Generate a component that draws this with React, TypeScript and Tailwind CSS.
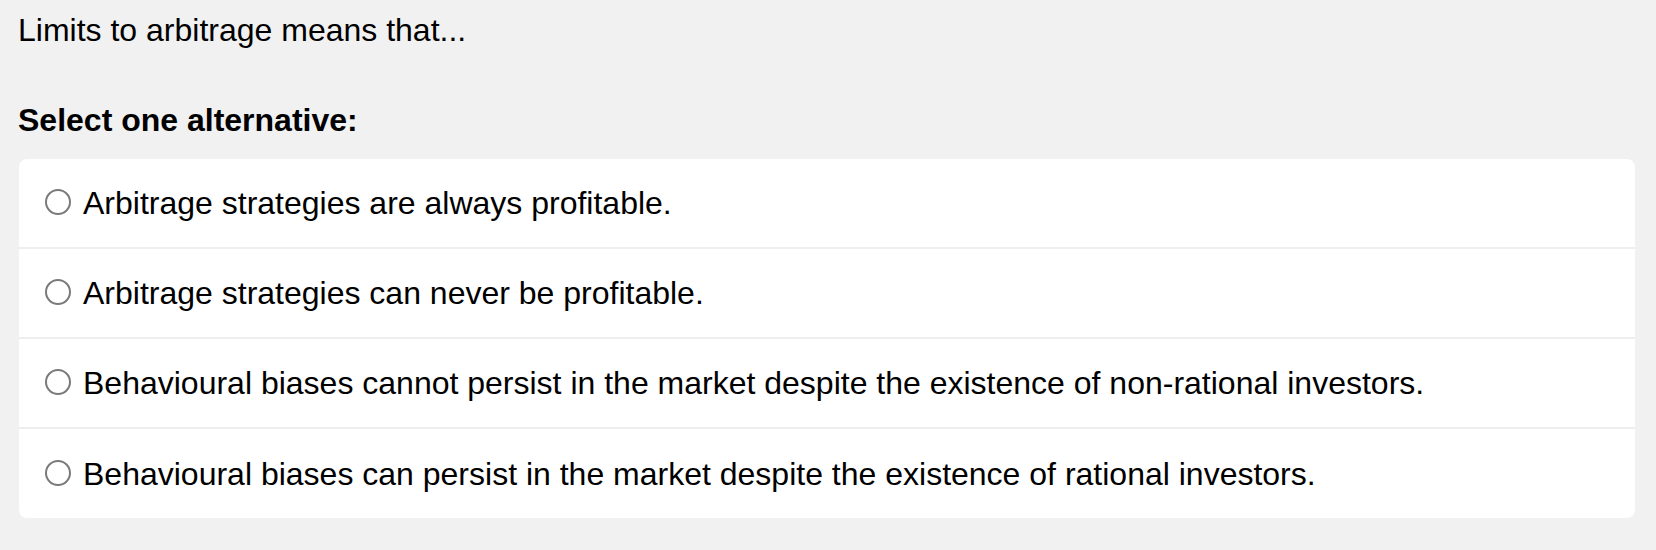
import React from 'react'

const options = [
	'Arbitrage strategies are always profitable.',
	'Arbitrage strategies can never be profitable.',
	'Behavioural biases cannot persist in the market despite the existence of non-rational investors.',
	'Behavioural biases can persist in the market despite the existence of rational investors.',
]

export default function App() {
	return (
		<div
			className="min-h-[550px] w-full bg-[#f1f1f1] pl-[18px] pr-[21px] pt-[12px] text-black"
			style={{ fontFamily: '"Liberation Sans", Arial, sans-serif' }}
		>
			<p className="text-[32px] leading-[36px]">Limits to arbitrage means that...</p>
			<p className="mt-[54px] text-[32px] font-bold leading-[36px]">Select one alternative:</p>

			{/* options card */}
			<div className="ml-[1px] mt-[21px] flex flex-col gap-[2px] overflow-hidden rounded-[8px] bg-[#eeeeee]">
				{options.map((opt, i) => (
					<label
						key={opt}
						className={`flex items-center bg-white pl-[26px] ${i === options.length - 1 ? 'h-[89px]' : 'h-[88px]'}`}
					>
						<span className="mt-[-2px] h-[26px] w-[26px] shrink-0 rounded-full border-2 border-[#7a7a7a] bg-white" />
						<span className="ml-[12px] text-[32px] leading-[36px]">{opt}</span>
					</label>
				))}
			</div>
		</div>
	)
}
